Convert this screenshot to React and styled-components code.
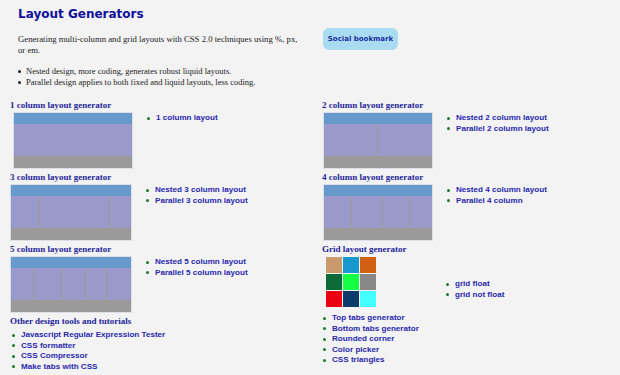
import React from "react";
import styled, { createGlobalStyle } from "styled-components";

const GlobalStyle = createGlobalStyle`
  html, body {
    margin: 0;
    padding: 0;
    background: #f3f3f3;
  }
`;

const Page = styled.div`
  width: 620px;
  height: 375px;
  overflow: hidden;
  background: #f3f3f3;
  padding-top: 5px;
  box-sizing: border-box;
`;

const Top = styled.div`
  display: flex;
`;

const Intro = styled.div`
  width: 305px;
  padding-left: 18px;
`;

const Title = styled.h1`
  margin: 0;
  font-family: "DejaVu Sans", Verdana, sans-serif;
  font-weight: bold;
  font-size: 12px;
  line-height: 18px;
  color: #0f0f9c;
`;

const Lead = styled.p`
  margin: 11px 0 0;
  font-family: "Liberation Serif", "Times New Roman", serif;
  font-size: 8.7px;
  line-height: 10.5px;
  color: #222;
  width: 286px;
`;

const IntroList = styled.ul`
  margin: 11px 0 0;
  padding: 0;
  list-style: none;
  font-family: "Liberation Serif", "Times New Roman", serif;
  font-size: 8.5px;
  line-height: 11px;
  color: #222;
`;

const Aside = styled.div`
  padding-top: 23px;
`;

const Bookmark = styled.a`
  display: flex;
  align-items: center;
  justify-content: center;
  width: 75px;
  height: 22px;
  border-radius: 6px;
  background: #a9dcf1;
  color: #1b2fa3;
  font-family: "DejaVu Sans", Verdana, sans-serif;
  font-weight: bold;
  font-size: 7px;
  text-decoration: none;
`;

const Columns = styled.div`
  display: grid;
  grid-template-columns: 312px 1fr;
  padding-left: 10px;
  margin-top: 12px;
`;

const Column = styled.div`
  display: flex;
  flex-direction: column;
`;

const Section = styled.div`
  margin-bottom: 4px;
`;

const Heading = styled.h2`
  margin: 0 0 3px;
  font-family: "Liberation Serif", "Times New Roman", serif;
  font-weight: bold;
  font-size: 9px;
  line-height: 10px;
  color: #24249a;
`;

const Row = styled.div`
  display: flex;
  align-items: flex-start;
`;

const Thumb = styled.div`
  display: flex;
  flex-direction: column;
  width: ${(p) => p.$width}px;
  height: 55px;
  margin-left: ${(p) => p.$offset}px;
  box-shadow: 0 0 0 1px #dedee6;
`;

const Band = styled.div`
  height: ${(p) => p.$h}px;
  background: ${(p) => p.$bg};
`;

const Body = styled.div`
  flex: 1;
  display: grid;
  grid-template-columns: ${(p) => p.$cols};
  gap: 2px;
  background: #9b9aac;
`;

const Col = styled.div`
  background: #9999cc;
`;

const Links = styled.ul`
  margin: 0 0 0 ${(p) => p.$gap ?? 15}px;
  padding: ${(p) => p.$top ?? 0}px 0 0;
  list-style: none;
`;

const Item = styled.li`
  display: flex;
  align-items: center;
  gap: ${(p) => (p.$plain ? 5 : 6)}px;
  font-family: ${(p) =>
    p.$plain
      ? `"Liberation Serif", "Times New Roman", serif`
      : `"Liberation Sans", Arial, sans-serif`};
  font-weight: ${(p) => (p.$plain ? "normal" : "bold")};
  font-size: ${(p) => (p.$plain ? 8.5 : 8.1)}px;
  line-height: ${(p) => (p.$plain ? 11 : 10.5)}px;
  color: ${(p) => (p.$plain ? "#222" : "#2828ad")};
`;

const Dot = styled.span`
  width: 3px;
  height: 3px;
  border-radius: 50%;
  flex: none;
  background: ${(p) => (p.$dark ? "#222" : "#1f7a2a")};
`;

const Palette = styled.div`
  display: grid;
  grid-template-columns: repeat(3, 16px);
  grid-auto-rows: 16px;
  gap: 1px;
  margin-left: 4px;
`;

const Swatch = styled.div`
  background: ${(p) => p.$c};
`;

function Layout({ cols, width = 120, offset = 1 }) {
  return (
    <Thumb $width={width} $offset={offset}>
      <Band $h={11} $bg="#6699cc" />
      <Body $cols={cols.map((c) => `${c}fr`).join(" ")}>
        {cols.map((c, i) => (
          <Col key={i} />
        ))}
      </Body>
      <Band $h={12} $bg="#9a9a9a" />
    </Thumb>
  );
}

function LinkList({ items, gap, top }) {
  return (
    <Links $gap={gap} $top={top}>
      {items.map((t) => (
        <Item key={t}>
          <Dot />
          {t}
        </Item>
      ))}
    </Links>
  );
}

function Generator({ title, cols, width, offset, items }) {
  return (
    <Section>
      <Heading>{title}</Heading>
      <Row>
        <Layout cols={cols} width={width} offset={offset} />
        <LinkList items={items} />
      </Row>
    </Section>
  );
}

const swatches = [
  "#c99a6b", "#1799cf", "#d35f12",
  "#0b6a38", "#14ff45", "#878787",
  "#ea0210", "#0b3a6b", "#44ffff",
];

export default function App() {
  return (
    <>
      <GlobalStyle />
      <Page>
        <Top>
          <Intro>
            <Title>Layout Generators</Title>
            <Lead>
              Generating multi-column and grid layouts with CSS 2.0 techniques
              using %, px, or em.
            </Lead>
            <IntroList>
              <Item $plain>
                <Dot $dark />
                Nested design, more coding, generates robust liquid layouts.
              </Item>
              <Item $plain>
                <Dot $dark />
                Parallel design applies to both fixed and liquid layouts, less
                coding.
              </Item>
            </IntroList>
          </Intro>
          <Aside>
            <Bookmark href="#">Social bookmark</Bookmark>
          </Aside>
        </Top>

        <Columns>
          <Column>
            <Generator
              title="1 column layout generator"
              cols={[1]}
              width={118}
              offset={4}
              items={["1 column layout"]}
            />
            <Generator
              title="3 column layout generator"
              cols={[27, 68, 21]}
              items={["Nested 3 column layout", "Parallel 3 column layout"]}
            />
            <Generator
              title="5 column layout generator"
              cols={[24, 26, 24, 21, 25]}
              items={["Nested 5 column layout", "Parallel 5 column layout"]}
            />
            <Section>
              <Heading>Other design tools and tutorials</Heading>
              <LinkList
                gap={2}
                top={1}
                items={[
                  "Javascript Regular Expression Tester",
                  "CSS formatter",
                  "CSS Compressor",
                  "Make tabs with CSS",
                ]}
              />
            </Section>
          </Column>

          <Column>
            <Generator
              title="2 column layout generator"
              cols={[1, 1]}
              width={108}
              offset={2}
              items={["Nested 2 column layout", "Parallel 2 column layout"]}
            />
            <Generator
              title="4 column layout generator"
              cols={[28, 30, 28, 22]}
              width={108}
              offset={2}
              items={["Nested 4 column layout", "Parallel 4 column"]}
            />
            <Section>
              <Heading>Grid layout generator</Heading>
              <Row>
                <Palette>
                  {swatches.map((c, i) => (
                    <Swatch key={i} $c={c} />
                  ))}
                </Palette>
                <LinkList
                  gap={70}
                  top={22}
                  items={["grid float", "grid not float"]}
                />
              </Row>
              <LinkList
                gap={1}
                top={6}
                items={[
                  "Top tabs generator",
                  "Bottom tabs generator",
                  "Rounded corner",
                  "Color picker",
                  "CSS triangles",
                ]}
              />
            </Section>
          </Column>
        </Columns>
      </Page>
    </>
  );
}
